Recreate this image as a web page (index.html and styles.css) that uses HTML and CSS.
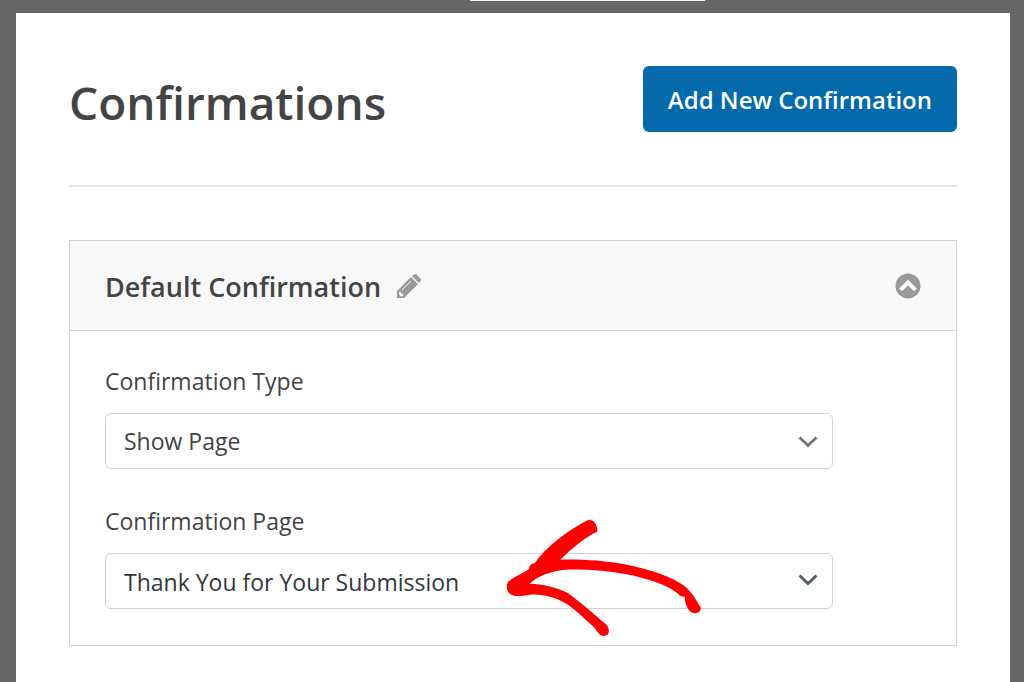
FILE: index.html
```html
<!DOCTYPE html>
<html lang="en">
<head>
    <meta charset="UTF-8">
    <meta name="viewport" content="width=device-width, initial-scale=1.0">
    <title>Confirmations</title>
    <link rel="stylesheet" href="styles.css">
</head>
<body>
    <div class="top-strip"></div>
    <main class="panel">
        <header class="panel-header">
            <h1>Confirmations</h1>
            <button type="button" class="btn-add">Add New Confirmation</button>
        </header>

        <section class="block">
            <div class="block-header">
                <h2>Default Confirmation</h2>
                <button type="button" class="btn-icon" aria-label="Edit name">
                    <svg width="26" height="26" viewBox="0 0 26 26">
                        <path fill="#999" d="M1 18 L15 4 L22 11 L8 25 H1 Z M16 3 L18 1.500 Q19.500 0.500 21 2 L24.500 5.500 Q25.500 7 24.500 8 L23 10 Z"/>
                        <path fill="none" stroke="#f8f8f8" stroke-width="1" d="M6 17 L15 8"/>
                        <path fill="#f8f8f8" d="M3 19 L4.500 18.500 L5 20.500 L7.500 21 L7 23 L5 23.500 L3 21.500 Z"/>
                    </svg>
                </button>
                <button type="button" class="btn-icon btn-toggle" aria-label="Collapse">
                    <svg width="26" height="26" viewBox="0 0 26 26">
                        <circle cx="13" cy="13" r="12.500" fill="#999"/>
                        <path fill="none" stroke="#f8f8f8" stroke-width="4" stroke-linecap="square" stroke-linejoin="miter" d="M7 15.500 L13 9.500 L19 15.500"/>
                    </svg>
                </button>
            </div>
            <div class="block-content">
                <div class="field">
                    <label for="type">Confirmation Type</label>
                    <div class="select-wrap">
                        <select id="type">
                            <option>Show Page</option>
                        </select>
                        <svg class="chevron" width="20" height="12" viewBox="0 0 20 12">
                            <path fill="none" stroke="currentColor" stroke-width="3" d="M1.500 1.500 L10 9.500 L18.500 1.500"/>
                        </svg>
                    </div>
                </div>
                <div class="field">
                    <label for="page">Confirmation Page</label>
                    <div class="select-wrap">
                        <select id="page" class="selected">
                            <option>Thank You for Your Submission</option>
                        </select>
                        <svg class="chevron chevron-dark" width="20" height="12" viewBox="0 0 20 12">
                            <path fill="none" stroke="currentColor" stroke-width="3" d="M1.500 1.500 L10 9.500 L18.500 1.500"/>
                        </svg>
                        <!-- red pointer arrow -->
                        <svg class="arrow" width="240" height="150" viewBox="0 0 720 450">
                            <path fill="#f00" d="M318 63 C328 58 338 60 345 68 C350 76 354 88 351 96 C320 108 276 145 241 179 C300 177 370 182 425 191 C490 203 570 225 612 257 C635 275 648 298 662 322 C664 333 655 340 643 340 C626 337 615 315 614 290 C605 291 600 287 594 281 C560 253 500 235 440 223 C380 211 310 206 255 209 C210 214 172 228 149 251 C190 251 225 262 262 278 C300 305 345 345 380 375 C391 390 389 406 371 408 C358 406 350 392 341 380 C320 364 295 336 262 313 C225 290 180 280 145 285 C125 288 105 290 94 284 C79 276 76 255 86 244 C103 230 130 220 147 207 C148 196 153 191 165 189 C195 144 260 94 318 63 Z"/>
                        </svg>
                    </div>
                </div>
            </div>
        </section>
    </main>
</body>
</html>
```
FILE: styles.css
```css
* {
    box-sizing: border-box;
}

body {
    font-family: "Open Sans", "Noto Sans", sans-serif;
    background-color: #666;
    color: #444;
    margin: 0;
    padding: 0 14px 0 16px;
    display: flex;
    flex-direction: column;
    min-height: 100vh;
}

.top-strip {
    width: 235px;
    height: 1px;
    margin: 0 0 12px 454px;
    background-color: #f1f1f1;
}

.panel {
    flex: 1;
    background-color: #fff;
    padding: 53px 53px 36px;
}

.panel-header {
    display: flex;
    justify-content: space-between;
    align-items: center;
    padding-bottom: 53px;
    border-bottom: 2px solid #e5e5e5;
    margin-bottom: 53px;
}

h1 {
    margin: 0;
    padding-top: 6px;
    font-size: 46px;
    line-height: 60px;
    font-weight: 600;
}

.btn-add {
    height: 66px;
    padding: 0 25px;
    border: none;
    border-radius: 6px;
    background-color: #036aab;
    color: #fff;
    font-family: inherit;
    font-size: 24px;
    font-weight: 600;
    cursor: pointer;
}

.block {
    border: 1px solid #d2d2d2;
}

.block-header {
    display: flex;
    align-items: center;
    height: 90px;
    padding: 1px 35px 0;
    background-color: #f8f8f8;
    border-bottom: 1px solid #d2d2d2;
}

h2 {
    margin: 0;
    font-size: 27px;
    font-weight: 600;
}

.btn-icon {
    display: flex;
    padding: 0;
    border: none;
    background: none;
    margin-left: 15px;
    cursor: pointer;
}

.btn-toggle {
    margin-left: auto;
}

.block-content {
    display: grid;
    gap: 34px;
    padding: 32px 123px 36px 35px;
}

.field label {
    display: block;
    margin-bottom: 14px;
    font-size: 23px;
    line-height: 36px;
}

.select-wrap {
    position: relative;
}

select {
    display: block;
    width: 100%;
    height: 56px;
    padding: 0 50px 0 18px;
    border: 1px solid #d2d2d2;
    border-radius: 6px;
    background-color: #fff;
    color: #444;
    font-family: inherit;
    font-size: 23px;
    appearance: none;
}

.selected {
    padding-top: 2px;
    color: #32373c;
}

.chevron {
    position: absolute;
    right: 15px;
    top: 23px;
    color: #777;
    pointer-events: none;
}

.chevron-dark {
    top: 21px;
    color: #555d66;
}

.arrow {
    position: absolute;
    left: 375px;
    top: -53px;
    pointer-events: none;
}
```
